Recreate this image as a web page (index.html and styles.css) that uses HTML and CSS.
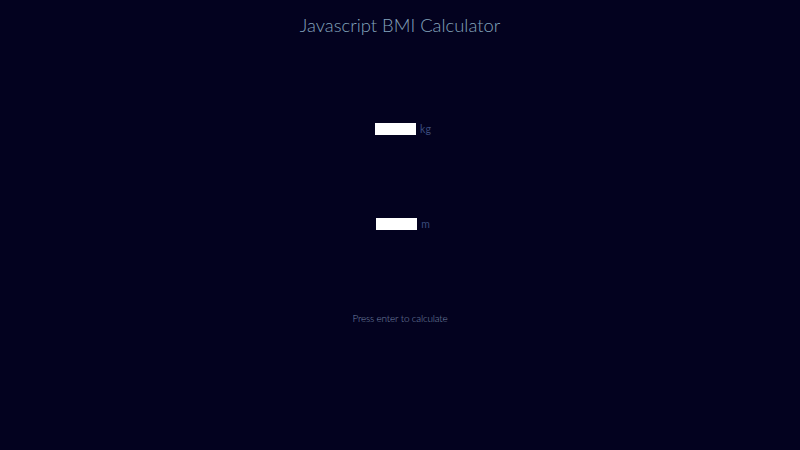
FILE: index.html
```html
<!DOCTYPE html>
<html lang="en">
<head>
<meta charset="utf-8">
<title>Javascript BMI Calculator</title>
<link rel="stylesheet" href="styles.css">
</head>
<body>
<main class="page">
  <h1 class="title">Javascript BMI Calculator</h1>
  <div class="field"><input class="box" type="text"><span class="unit">kg</span></div>
  <div class="field field-2"><input class="box" type="text"><span class="unit">m</span></div>
  <p class="hint">Press enter to calculate</p>
</main>
</body>
</html>
```
FILE: styles.css
```css
html, body {
  margin: 0;
  padding: 0;
  background: #03021f;
  height: 100%;
}
.page {
  display: flex;
  flex-direction: column;
  align-items: center;
  font-family: Lato, "Liberation Sans", sans-serif;
}
.title {
  margin: 14px 0 0 0;
  font-size: 18.4px;
  font-weight: 300;
  color: #84a4bd;
  line-height: 22px;
}
.field {
  display: flex;
  align-items: center;
  gap: 4px;
  margin-top: 87px;
  margin-left: 6px;
  height: 12px;
}
.field-2 {
  margin-top: 83px;
}
.box {
  width: 41px;
  height: 12px;
  padding: 0;
  border: none;
  background: #ffffff;
  box-sizing: border-box;
}
.unit {
  font-size: 10.5px;
  font-weight: 400;
  color: #3a4a7c;
  line-height: 12px;
}
.hint {
  margin: 82px 0 0 0;
  font-size: 10px;
  font-weight: 300;
  letter-spacing: -0.2px;
  color: #7385a6;
  line-height: 12px;
}
```
